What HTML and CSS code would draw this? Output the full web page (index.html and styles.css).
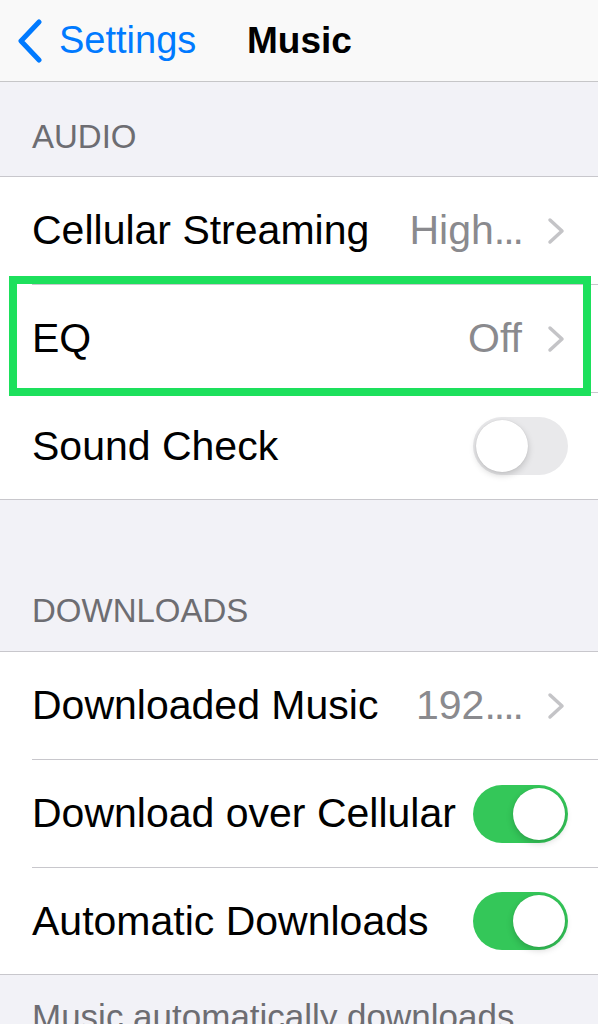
FILE: index.html
```html
<!DOCTYPE html>
<html>
<head>
<meta charset="utf-8">
<link rel="stylesheet" href="styles.css">
</head>
<body>
<div class="screen">
  <header class="nav">
    <div class="back">
      <svg class="back-chev" width="26" height="44" viewBox="0 0 26 44"><polyline points="22,3 4,22 22,41" fill="none" stroke="#007aff" stroke-width="5" stroke-linecap="round" stroke-linejoin="round"/></svg>
      <span class="back-label">Settings</span>
    </div>
    <div class="title">Music</div>
  </header>

  <div class="section-head audio-head">AUDIO</div>
  <div class="group">
    <div class="row">
      <span class="label">Cellular Streaming</span>
      <span class="accessory"><span class="value">High<span class="dots">...</span></span><svg class="chev" width="18" height="28" viewBox="0 0 18 28"><polyline points="3,3 15,14 3,25" fill="none" stroke="#c4c4c7" stroke-width="3.5" stroke-linecap="round" stroke-linejoin="round"/></svg></span>
    </div>
    <div class="row eq">
      <span class="label">EQ</span>
      <span class="accessory"><span class="value">Off</span><svg class="chev" width="18" height="28" viewBox="0 0 18 28"><polyline points="3,3 15,14 3,25" fill="none" stroke="#c4c4c7" stroke-width="3.5" stroke-linecap="round" stroke-linejoin="round"/></svg></span>
      <div class="highlight"></div>
    </div>
    <div class="row">
      <span class="label">Sound Check</span>
      <span class="toggle off"><span class="knob"></span></span>
    </div>
  </div>

  <div class="section-head downloads-head">DOWNLOADS</div>
  <div class="group">
    <div class="row">
      <span class="label">Downloaded Music</span>
      <span class="accessory"><span class="value">192<span class="dots">....</span></span><svg class="chev" width="18" height="28" viewBox="0 0 18 28"><polyline points="3,3 15,14 3,25" fill="none" stroke="#c4c4c7" stroke-width="3.5" stroke-linecap="round" stroke-linejoin="round"/></svg></span>
    </div>
    <div class="row">
      <span class="label">Download over Cellular</span>
      <span class="toggle on"><span class="knob"></span></span>
    </div>
    <div class="row">
      <span class="label">Automatic Downloads</span>
      <span class="toggle on"><span class="knob"></span></span>
    </div>
  </div>
  <div class="footer">Music automatically downloads</div>
</div>
</body>
</html>
```
FILE: styles.css
```css
html, body {
  margin: 0;
  padding: 0;
  background: #f2f2f7;
}
.screen {
  width: 598px;
  height: 1024px;
  overflow: hidden;
  background: #f2f2f7;
  font-family: "Liberation Sans", Arial, sans-serif;
  position: relative;
}
.nav {
  height: 82px;
  box-sizing: border-box;
  background: #f9f9f9;
  border-bottom: 1px solid #c6c6c8;
  display: flex;
  align-items: center;
}
.back {
  display: flex;
  align-items: center;
  padding-left: 17px;
  width: 230px;
  box-sizing: border-box;
}
.back-chev {
  display: block;
  margin-right: 16px;
}
.back-label {
  font-size: 38px;
  color: #007aff;
}
.title {
  margin-left: 17px;
  font-size: 37px;
  font-weight: bold;
  color: #000;
}
.section-head {
  font-size: 33px;
  color: #6d6d72;
  padding-left: 32px;
  display: flex;
  align-items: flex-end;
  box-sizing: border-box;
}
.audio-head {
  height: 94px;
  padding-bottom: 20px;
}
.downloads-head {
  height: 151px;
  padding-bottom: 21px;
}
.group {
  background: #fff;
  border-top: 1px solid #c8c7cc;
  border-bottom: 1px solid #c8c7cc;
  padding-left: 32px;
}
.row {
  height: 107px;
  display: flex;
  align-items: center;
  justify-content: space-between;
  border-bottom: 1px solid #c8c7cc;
  position: relative;
  padding-right: 30px;
}
.row:last-child {
  border-bottom: none;
  height: 106px;
}
.label {
  font-size: 41px;
  color: #000;
  white-space: nowrap;
}
.accessory {
  display: flex;
  align-items: center;
  padding-right: 3px;
}
.value {
  font-size: 41px;
  color: #8a8a8e;
  margin-right: 25px;
  white-space: nowrap;
}
.dots {
  letter-spacing: -2px;
}
.chev {
  display: block;
}
.toggle {
  width: 95px;
  height: 58px;
  border-radius: 29px;
  position: relative;
  flex: none;
}
.toggle.off {
  background: #e9e9eb;
}
.toggle.on {
  background: #34c759;
}
.knob {
  position: absolute;
  top: 3px;
  width: 52px;
  height: 52px;
  border-radius: 50%;
  background: #fff;
  box-shadow: 0 3px 7px rgba(0,0,0,0.18), 0 0 1px rgba(0,0,0,0.14);
}
.toggle.off .knob {
  left: 3px;
}
.toggle.on .knob {
  right: 3px;
}
.highlight {
  position: absolute;
  left: -23px;
  right: 7px;
  top: -9px;
  bottom: -4px;
  border: 8px solid #1de05c;
  pointer-events: none;
}
.footer {
  font-size: 35px;
  color: #6d6d72;
  padding: 22px 32px 0;
  white-space: nowrap;
}
```
